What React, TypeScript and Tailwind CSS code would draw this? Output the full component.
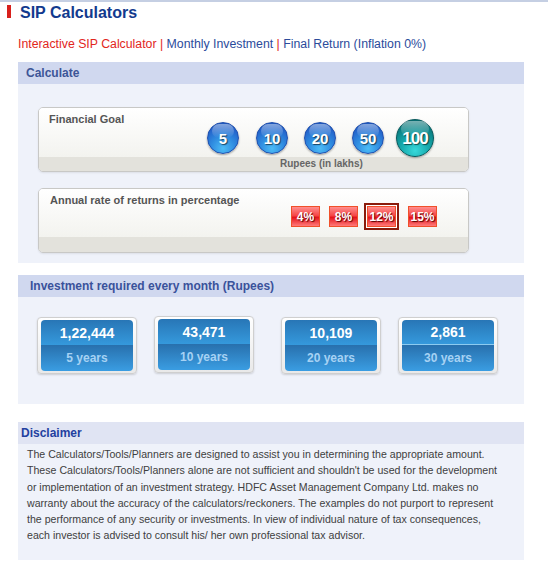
import React from "react";

function Circle({ label, big }: { label: string; big?: boolean }) {
  const base = big
    ? "w-[38px] h-[38px] border-[#06595c] bg-[radial-gradient(circle_at_50%_85%,#38d8da_0%,#16a9ac_40%,#0b7f82_72%,#075e62_100%)] text-[17px] tracking-[-1px]"
    : "w-[32px] h-[32px] border-[#1f4fae] bg-[radial-gradient(circle_at_50%_85%,#4cbcf6_0%,#2f8ce0_40%,#2465cc_72%,#1d4fb0_100%)] text-[15px]";
  return (
    <div
      className={`relative flex items-center justify-center rounded-full border shadow-[0_1px_2px_rgba(0,0,0,0.35)] ${base}`}
    >
      <div className="absolute left-[4px] right-[4px] top-[1px] h-[45%] rounded-full bg-gradient-to-b from-white/45 to-white/0" />
      <span className="relative font-bold text-white [text-shadow:1px_1px_1px_rgba(0,0,0,0.6)] leading-none">
        {label}
      </span>
    </div>
  );
}

function Pct({ label }: { label: string }) {
  return (
    <div className="flex h-[21px] w-[29px] items-center justify-center border border-[#f0502a] bg-[linear-gradient(to_bottom,#ff8e8e_0%,#f54646_45%,#e5151c_55%,#ff7a7a_100%)]">
      <span className="text-[12px] font-bold leading-none text-white [text-shadow:1px_1px_1px_#5a0000]">
        {label}
      </span>
    </div>
  );
}

function ResultBox({ value, years, up, line }: { value: string; years: string; up?: boolean; line?: boolean }) {
  return (
    <div
      className={`w-[100px] h-[57px] rounded-[4px] border border-[#cfcfcf] bg-[linear-gradient(to_bottom,#ffffff,#e9e9e9)] px-[3px] pt-[2px] pb-[2px] shadow-[0_1px_2px_rgba(0,0,0,0.15)] ${
        up ? "-mt-[1px]" : ""
      }`}
    >
      <div className="flex h-full flex-col overflow-hidden rounded-[4px]">
        <div
          className={`flex h-[25px] items-center justify-center bg-[linear-gradient(to_bottom,#2876b6,#3599dc)] ${
            line ? "border-b border-[#8ccbf0]" : ""
          }`}
        >
          <span className="text-[14px] font-bold leading-none text-white">{value}</span>
        </div>
        <div className="flex flex-1 items-center justify-center bg-[linear-gradient(to_bottom,#2870ad,#3a9de2)]">
          <span className="text-[12px] font-bold leading-none text-[#a6d2f4]">{years}</span>
        </div>
      </div>
    </div>
  );
}

export default function App() {
  return (
    <div className="w-[548px] h-[564px] bg-white font-['Liberation_Sans',Arial,sans-serif] overflow-hidden">
      <div className="h-[2px] bg-[#c5cfe3]" />
      <div className="mt-[2px] flex h-[18px] items-start">
        <div className="ml-[7px] mt-[1px] h-[13px] w-[4px] bg-[#d8201c]" />
        <div className="ml-[9px] text-[16px] font-bold leading-[18px] text-[#123a8e]">SIP Calculators</div>
      </div>
      <div className="ml-[18px] mt-[15px] h-[14px] text-[12.3px] leading-[14px] whitespace-nowrap">
        <span className="text-[#e2261c]">Interactive SIP Calculator</span>
        <span className="text-[#e2261c]"> | </span>
        <span className="text-[#2b4b9b]">Monthly Investment</span>
        <span className="text-[#e2261c]"> | </span>
        <span className="text-[#2b4b9b]">Final Return (Inflation 0%)</span>
      </div>

      {/* Calculate section */}
      <div className="ml-[18px] mt-[11px] w-[506px]">
        <div className="flex h-[22px] items-center bg-[#d0d8ef] pl-[8px] text-[12px] font-bold text-[#3d5597]">
          Calculate
        </div>
        <div className="h-[179px] bg-[#eff2fa] pl-[20px] pt-[23px]">
          <div className="w-[431px] overflow-hidden rounded-[5px] border border-[#c8c8c6] shadow-[0_1px_2px_rgba(0,0,0,0.08)]">
            <div className="flex h-[49px] items-start bg-[linear-gradient(to_bottom,#ffffff,#f3f3ef)]">
              <div className="w-[168px] pl-[10px] pt-[5px] text-[11px] font-bold leading-[13px] text-[#555555]">
                Financial Goal
              </div>
              <div className="mt-[10px] flex h-[40px] items-center">
                <Circle label="5" />
                <div className="ml-[17px]">
                  <Circle label="10" />
                </div>
                <div className="ml-[16px]">
                  <Circle label="20" />
                </div>
                <div className="ml-[16px]">
                  <Circle label="50" />
                </div>
                <div className="ml-[12px]">
                  <Circle label="100" big />
                </div>
              </div>
            </div>
            <div className="h-[14px] bg-[#e3e2dc] pl-[241px] text-[10px] font-bold leading-[14px] text-[#666666]">
              Rupees (in lakhs)
            </div>
          </div>

          <div className="mt-[16px] w-[431px] overflow-hidden rounded-[5px] border border-[#c8c8c6] shadow-[0_1px_2px_rgba(0,0,0,0.08)]">
            <div className="flex h-[48px] items-start bg-[linear-gradient(to_bottom,#ffffff,#f3f3ef)]">
              <div className="w-[252px] pl-[11px] pt-[5px] text-[11px] font-bold leading-[13px] text-[#555555]">
                Annual rate of returns in percentage
              </div>
              <div className="mt-[14px] flex h-[27px] items-center">
                <Pct label="4%" />
                <div className="ml-[9px]">
                  <Pct label="8%" />
                </div>
                <div className="ml-[6px] border-2 border-[#8b1b0b] bg-white p-[1px]">
                  <Pct label="12%" />
                </div>
                <div className="ml-[9px]">
                  <Pct label="15%" />
                </div>
              </div>
            </div>
            <div className="h-[15px] bg-[#e3e2dc]" />
          </div>
        </div>
      </div>

      {/* Investment section */}
      <div className="ml-[18px] mt-[12px] w-[506px]">
        <div className="flex h-[22px] items-center bg-[#d0d8ef] pl-[12px] text-[12px] font-bold text-[#3a529b]">
          Investment required every month (Rupees)
        </div>
        <div className="flex h-[107px] items-start bg-[#eff2fa] pl-[19px] pt-[20px]">
          <ResultBox value="1,22,444" years="5 years" />
          <div className="ml-[17px]">
            <ResultBox value="43,471" years="10 years" up />
          </div>
          <div className="ml-[27px]">
            <ResultBox value="10,109" years="20 years" />
          </div>
          <div className="ml-[17px]">
            <ResultBox value="2,861" years="30 years" line />
          </div>
        </div>
      </div>

      {/* Disclaimer */}
      <div className="ml-[18px] mt-[18px] w-[506px]">
        <div className="flex h-[22px] items-center bg-[#e0e4f3] pl-[3px] text-[12px] font-bold text-[#23409f]">
          Disclaimer
        </div>
        <div className="h-[116px] bg-[#eff2fa] pl-[9px] pt-[2px] text-[10.6px] leading-[16.3px] text-[#404040] whitespace-nowrap">
          <div>The Calculators/Tools/Planners are designed to assist you in determining the appropriate amount.</div>
          <div>These Calculators/Tools/Planners alone are not sufficient and shouldn't be used for the development</div>
          <div>or implementation of an investment strategy. HDFC Asset Management Company Ltd. makes no</div>
          <div>warranty about the accuracy of the calculators/reckoners. The examples do not purport to represent</div>
          <div>the performance of any security or investments. In view of individual nature of tax consequences,</div>
          <div>each investor is advised to consult his/ her own professional tax advisor.</div>
        </div>
      </div>
    </div>
  );
}
